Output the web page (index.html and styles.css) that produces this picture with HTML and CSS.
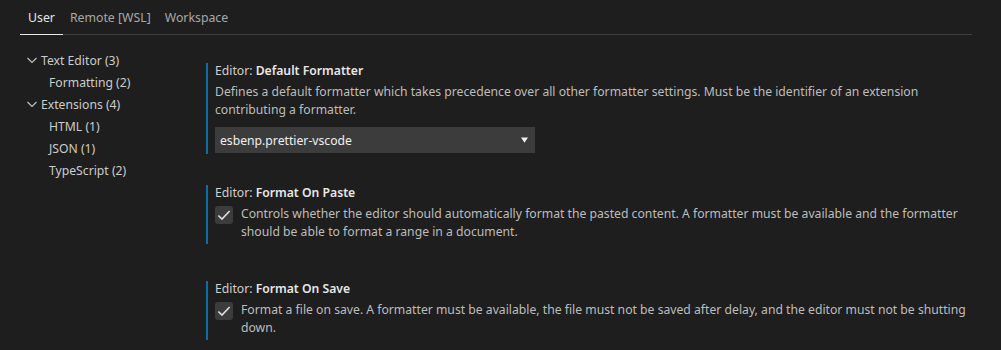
FILE: index.html
```html
<!DOCTYPE html>
<html lang="en">
<head>
    <meta charset="UTF-8">
    <title>Settings</title>
    <link rel="stylesheet" href="styles.css">
</head>
<body>

    <div class="settings">
        <!-- Scope tabs -->
        <div class="tabs">
            <div class="tab active">User</div>
            <div class="tab">Remote [WSL]</div>
            <div class="tab">Workspace</div>
        </div>

        <div class="settings-body">
            <!-- Table of contents -->
            <div class="toc">
                <div class="toc-row">
                    <svg class="chevron" viewBox="0 0 16 16"><path d="M3.5 6l4.5 4.5 4.5-4.5"/></svg>
                    <span>Text Editor (3)</span>
                </div>
                <div class="toc-row child">Formatting (2)</div>
                <div class="toc-row">
                    <svg class="chevron" viewBox="0 0 16 16"><path d="M3.5 6l4.5 4.5 4.5-4.5"/></svg>
                    <span>Extensions (4)</span>
                </div>
                <div class="toc-row child">HTML (1)</div>
                <div class="toc-row child">JSON (1)</div>
                <div class="toc-row child">TypeScript (2)</div>
            </div>

            <!-- Setting items -->
            <div class="setting-list">
                <div class="setting has-select">
                    <div class="setting-title">Editor: <strong>Default Formatter</strong></div>
                    <div class="setting-desc">Defines a default formatter which takes precedence over all other formatter settings. Must be the identifier of an extension contributing a formatter.</div>
                    <div class="select-box">
                        <span>esbenp.prettier-vscode</span>
                        <svg class="select-arrow" viewBox="0 0 8 6"><polygon points="0,0 8,0 4,6"/></svg>
                    </div>
                </div>

                <div class="setting">
                    <div class="setting-title">Editor: <strong>Format On Paste</strong></div>
                    <div class="check-row">
                        <div class="checkbox">
                            <svg viewBox="0 0 16 16"><path d="M3 8.5l3.2 3.2L13 4.5"/></svg>
                        </div>
                        <div class="setting-desc">Controls whether the editor should automatically format the pasted content. A formatter must be available and the formatter should be able to format a range in a document.</div>
                    </div>
                </div>

                <div class="setting">
                    <div class="setting-title">Editor: <strong>Format On Save</strong></div>
                    <div class="check-row">
                        <div class="checkbox">
                            <svg viewBox="0 0 16 16"><path d="M3 8.5l3.2 3.2L13 4.5"/></svg>
                        </div>
                        <div class="setting-desc">Format a file on save. A formatter must be available, the file must not be saved after delay, and the editor must not be shutting down.</div>
                    </div>
                </div>
            </div>
        </div>
    </div>

</body>
</html>
```

FILE: styles.css
```css
/* General */
body {
    margin: 0;
    background: #1e1e1e;
    color: #cccccc;
    font-family: 'Noto Sans', 'Open Sans', sans-serif;
    font-size: 12.2px;
    height: 350px;
    overflow: hidden;
}

.settings {
    padding: 0 29px 0 20px;
}

/* Tabs */
.tabs {
    display: flex;
    height: 34px;
    border-bottom: 1px solid #3f3f3f;
}

.tab {
    padding: 9px 7px 0;
    line-height: 18px;
    color: #a8a8a8;
    font-size: 12.3px;
}

.tab.active {
    padding: 9px 8px 0;
    color: #e7e7e7;
    border-bottom: 1px solid #e7e7e7;
    margin-bottom: -1px;
}

/* Layout */
.settings-body {
    display: flex;
}

/* TOC */
.toc {
    width: 186px;
    padding-top: 14px;
}

.toc-row {
    display: flex;
    align-items: center;
    height: 22px;
    padding-left: 4px;
    color: #cccccc;
}

.toc-row.child {
    padding-left: 29px;
}

.chevron {
    width: 16px;
    height: 16px;
    margin-right: 1px;
    fill: none;
    stroke: #c5c5c5;
    stroke-width: 1.1;
}

/* Settings */
.setting-list {
    flex: 1;
    padding-top: 30px;
}

.setting {
    border-left: 2px solid #0e6ea3;
    padding-left: 7px;
    margin-bottom: 39px;
}

.setting:last-child {
    margin-bottom: 0;
}

.setting.has-select {
    margin-bottom: 33px;
    padding-bottom: 1px;
}

.setting-title {
    line-height: 15px;
    margin-top: -2px;
    padding-bottom: 5px;
    color: #d0d0d0;
}

.setting-title strong {
    color: #e7e7e7;
    font-weight: 600;
}

.setting-desc {
    line-height: 18px;
    color: #bdbdbd;
}

.select-box {
    display: flex;
    align-items: center;
    justify-content: space-between;
    width: 320px;
    height: 26px;
    margin-top: 8px;
    padding: 0 7px 0 5px;
    box-sizing: border-box;
    background: #3c3c3c;
    color: #f0f0f0;
}

.select-arrow {
    width: 7px;
    height: 6px;
    fill: #f0f0f0;
}

.check-row {
    display: flex;
    align-items: flex-start;
    gap: 8px;
    padding-bottom: 3px;
}

.checkbox {
    flex: none;
    width: 18px;
    height: 18px;
    margin-top: 1px;
    border-radius: 3px;
    background: #3c3c3c;
}

.checkbox svg {
    width: 18px;
    height: 18px;
    fill: none;
    stroke: #e0e0e0;
    stroke-width: 1.4;
}
```
